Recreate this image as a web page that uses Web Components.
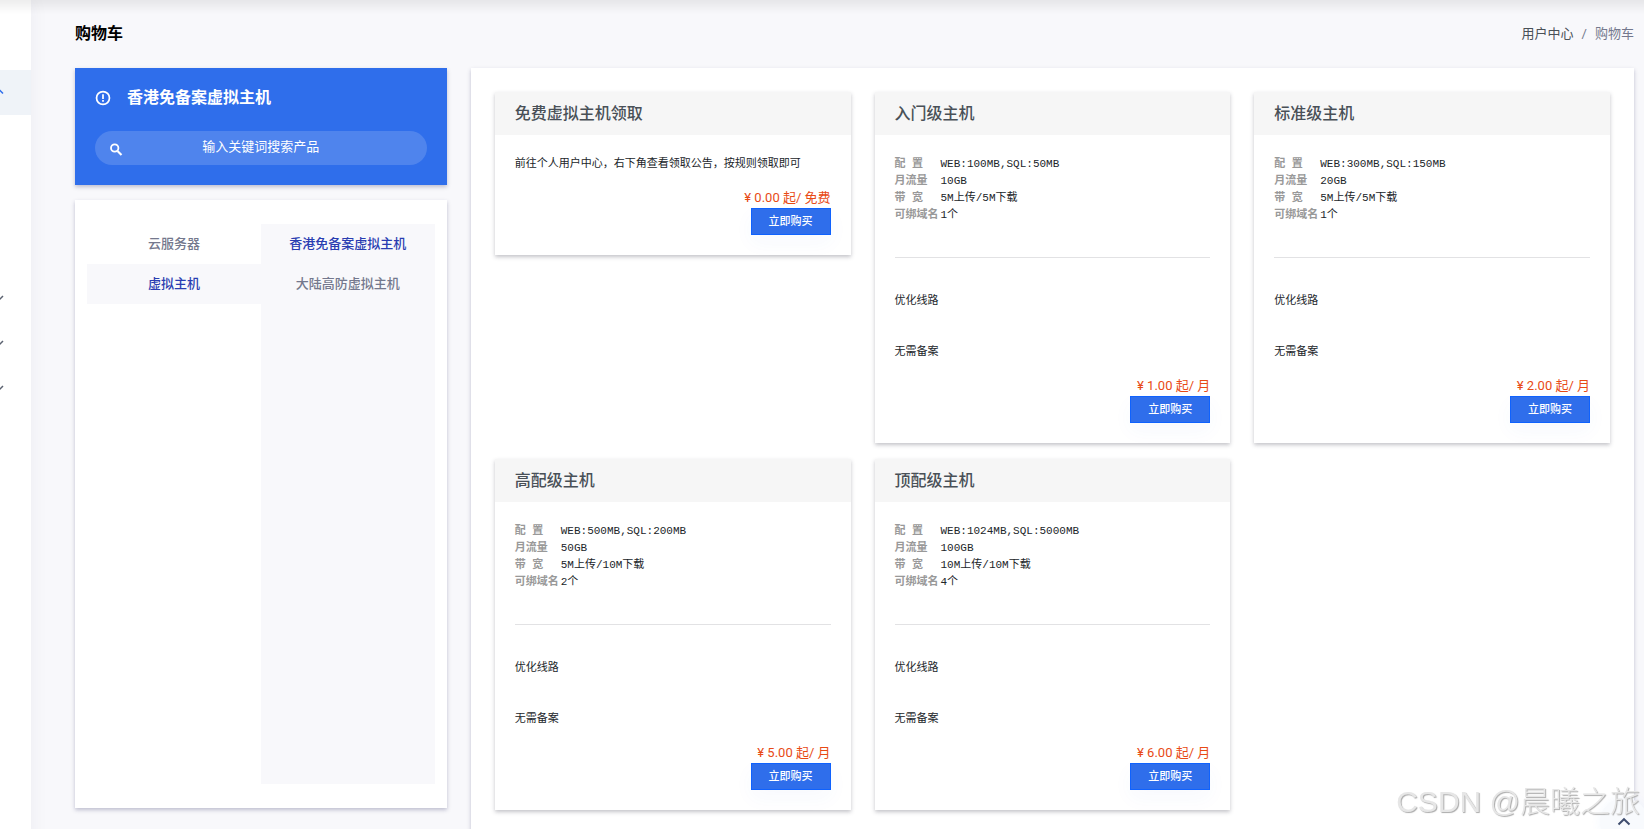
<!DOCTYPE html>
<html lang="zh-CN">
<head>
<meta charset="utf-8">
<meta name="viewport" content="width=device-width, initial-scale=1">
<title>购物车</title>
<style>
  body {
    margin: 0;
    background: #f8f8fb;
    color: #212529;
    font: 13px/20px Roboto, "Noto Sans CJK SC", sans-serif;
  }
</style>
</head>
<body>
<cart-page></cart-page>

<script>
const chevron = (dir) => dir === 'up'
  ? '<path d="M-3 6 L0 3.500 L3 6.500"/>'
  : '<path d="M-3 6 L0 9 L3 6"/>';

class SideNav extends HTMLElement {
  constructor() {
    super();
    this.attachShadow({ mode: 'open' });
    this.shadowRoot.innerHTML = `
      <style>
        :host { display: block; background: #fff; padding-top: 70px; box-shadow: 0 0 20px rgba(18, 18, 80, .05); }
        a { display: flex; align-items: center; height: 45px; color: #5b6170; }
        a.active { background: #eff3f8; color: #2f6eeb; margin-bottom: 158px; }
        svg { display: block; fill: none; stroke: currentColor; stroke-width: 1.5; }
      </style>
      <nav aria-label="主菜单"></nav>
    `;
  }

  connectedCallback() {
    const nav = this.shadowRoot.querySelector('nav');
    ['up', 'down', 'down', 'down'].forEach((dir, i) => {
      const a = document.createElement('a');
      a.href = '#';
      a.className = i === 0 ? 'active' : '';
      a.innerHTML = `<svg width="4" height="12" viewBox="0 0 4 12">${chevron(dir)}</svg>`;
      nav.appendChild(a);
    });
  }
}

class PageTitle extends HTMLElement {
  constructor() {
    super();
    this.attachShadow({ mode: 'open' });
    this.shadowRoot.innerHTML = `
      <style>
        :host { display: flex; align-items: center; justify-content: space-between; height: 68px; }
        h1 { margin: 0; font-size: 16px; line-height: 20px; color: #000; }
        ol { display: flex; gap: 8px; margin: 0; padding: 0; list-style: none; color: #74788d; }
        a { color: #495057; text-decoration: none; }
      </style>
      <h1><slot></slot></h1>
      <nav aria-label="breadcrumb">
        <ol><li><a href="#">用户中心</a></li><li>/</li><li><slot name="current"></slot></li></ol>
      </nav>
    `;
  }
}

class SearchBanner extends HTMLElement {
  constructor() {
    super();
    this.attachShadow({ mode: 'open' });
    this.shadowRoot.innerHTML = `
      <style>
        :host { display: block; padding: 20px; background: #2f6eeb; color: #fff; box-shadow: 0 2px 4px rgba(18, 18, 80, .25); }
        h2 { display: flex; align-items: center; gap: 16px; margin: 0 0 23px; font-size: 16px; line-height: 20px; }
        svg { display: block; flex: none; }
        label { display: flex; align-items: center; height: 34px; border-radius: 17px; padding: 0 14px; background: #4f84ed; }
        input {
          flex: 1; min-width: 0; margin: 0 14px 0 0; padding: 0 0 2px; border: 0; outline: 0; background: none;
          color: #fff; font: inherit; line-height: 20px; text-align: center;
        }
        input::placeholder { color: #fff; opacity: 1; }
      </style>
      <h2>
        <svg width="16" height="16" viewBox="0 0 24 24" fill="#fff"><path d="M12 1a11 11 0 1 0 0 22a11 11 0 0 0 0-22zM12 20.400a8.400 8.400 0 1 1 0-16.800a8.400 8.400 0 0 1 0 16.800zM10.700 6.500h2.600v7h-2.600zM10.700 15h2.600v2.600h-2.600z"/></svg>
        <slot></slot>
      </h2>
      <label>
        <svg width="14" height="16" viewBox="0 0 14 16" fill="none" stroke="#fff"><circle cx="5.700" cy="8" r="3.700" stroke-width="1.800"/><path d="M8.500 11 L12.500 15" stroke-width="2.200"/></svg>
        <input type="text" placeholder="输入关键词搜索产品" aria-label="输入关键词搜索产品">
      </label>
    `;
  }
}

class CategoryMenu extends HTMLElement {
  constructor() {
    super();
    this.attachShadow({ mode: 'open' });
    this.shadowRoot.innerHTML = `
      <style>
        :host { display: block; padding: 24px 12px; background: #fff; box-shadow: 0 2px 4px rgba(18, 18, 80, .25); }
        .columns { display: grid; grid-template-columns: 1fr 1fr; min-height: calc(100vh - 269px); }
        .columns div:last-child { background: #f8f8fb; }
        a { display: block; padding: 10px 0; color: #74788d; text-align: center; text-decoration: none; font-weight: 500; }
        a.active { background: #f8f8fb; color: #2a3db1; }
      </style>
      <div class="columns"></div>
    `;
  }

  connectedCallback() {
    const groups = [
      [['云服务器', false], ['虚拟主机', true]],
      [['香港免备案虚拟主机', true], ['大陆高防虚拟主机', false]],
    ];
    const columns = this.shadowRoot.querySelector('.columns');
    groups.forEach((group) => {
      const col = document.createElement('div');
      group.forEach(([name, active]) => {
        const a = document.createElement('a');
        a.href = '#';
        a.textContent = name;
        a.className = active ? 'active' : '';
        col.appendChild(a);
      });
      columns.appendChild(col);
    });
  }
}

class ProductCard extends HTMLElement {
  constructor() {
    super();
    this.attachShadow({ mode: 'open' });
    this.shadowRoot.innerHTML = `
      <style>
        :host { display: block; background: #fff; box-shadow: 0 2px 4px rgba(18, 18, 40, .25); }
        h3 { margin: 0; padding: 12px 20px 11px; background: #f6f6f6; color: #495057; font-size: 16px; line-height: 20px; font-weight: 500; }
        .body { padding: 21px 20px 20px; }
        .desc { font: 11px/17px "Liberation Mono", "Noto Sans CJK SC", monospace; }
        .desc p { margin: 0; }
        dl { display: grid; grid-template-columns: 46px 1fr; margin: 0; }
        dt { color: #999; font-weight: bold; }
        dd { margin: 0; }
        hr { margin: 33px 0 35px; border: 0; border-top: 1px solid #e2e2e4; }
        .desc p + p { margin-top: 34px; }
        .buy { display: flex; flex-direction: column; align-items: flex-end; margin-top: 15px; }
        .price { color: #e84a15; }
        button {
          height: 27px; padding: 0 17px; border: 1px solid #0f62fe; background: #2f6eeb; color: #fff;
          font: 500 11px/17px Roboto, "Noto Sans CJK SC", sans-serif; box-shadow: 0 8px 20px rgba(47, 110, 235, .04);
        }
      </style>
      <h3></h3>
      <div class="body">
        <div class="desc"></div>
        <div class="buy"><span class="price"></span><button type="button">立即购买</button></div>
      </div>
    `;
  }

  connectedCallback() {
    const root = this.shadowRoot;
    const { name, specs, notes, price, unit } = this.product;
    root.querySelector('h3').textContent = name;
    root.querySelector('.price').textContent = `¥ ${price} 起/ ${unit}`;
    let html = '';
    if (specs) {
      const labels = ['配 置', '月流量', '带 宽', '可绑域名'];
      html += '<dl>' + specs.map((v, i) => `<dt>${labels[i]}</dt><dd>${v}</dd>`).join('') + '</dl><hr>';
    }
    html += notes.map((n) => `<p>${n}</p>`).join('');
    root.querySelector('.desc').innerHTML = html;
  }
}

class ProductList extends HTMLElement {
  constructor() {
    super();
    this.attachShadow({ mode: 'open' });
    this.shadowRoot.innerHTML = `
      <style>
        :host {
          display: grid; grid-template-columns: repeat(3, minmax(0, 1fr)); align-items: start; gap: 16px 24px;
          padding: 24px 24px 40px; background: #fff; box-shadow: 0 2px 4px rgba(18, 18, 80, .25);
        }
      </style>
    `;
  }

  connectedCallback() {
    const notes = ['优化线路', '无需备案'];
    const products = [
      { name: '免费虚拟主机领取', notes: ['前往个人用户中心，右下角查看领取公告，按规则领取即可'], price: '0.00', unit: '免费' },
      { name: '入门级主机', specs: ['WEB:100MB,SQL:50MB', '10GB', '5M上传/5M下载', '1个'], notes, price: '1.00', unit: '月' },
      { name: '标准级主机', specs: ['WEB:300MB,SQL:150MB', '20GB', '5M上传/5M下载', '1个'], notes, price: '2.00', unit: '月' },
      { name: '高配级主机', specs: ['WEB:500MB,SQL:200MB', '50GB', '5M上传/10M下载', '2个'], notes, price: '5.00', unit: '月' },
      { name: '顶配级主机', specs: ['WEB:1024MB,SQL:5000MB', '100GB', '10M上传/10M下载', '4个'], notes, price: '6.00', unit: '月' },
    ];
    products.forEach((product) => {
      const card = document.createElement('product-card');
      card.product = product;
      this.shadowRoot.appendChild(card);
    });
  }
}

class BackTop extends HTMLElement {
  constructor() {
    super();
    this.attachShadow({ mode: 'open' });
    this.shadowRoot.innerHTML = `
      <style>
        :host { position: fixed; right: -4px; bottom: -17px; }
        button { display: grid; place-items: center; width: 48px; height: 48px; padding: 0; border: 0; border-radius: 24px; background: #f8fafd; box-shadow: 0 0 12px rgba(47, 110, 235, .05); }
        svg { fill: none; stroke: #3f4d6e; stroke-width: 2; }
      </style>
      <button type="button" aria-label="返回顶部">
        <svg width="14" height="10" viewBox="0 0 14 10"><path d="M1.500 7.500 L7 2.200 L12.500 7.500"/></svg>
      </button>
    `;
  }
}

class WaterMark extends HTMLElement {
  constructor() {
    super();
    this.attachShadow({ mode: 'open' });
    this.shadowRoot.innerHTML = `
      <style>
        :host {
          position: fixed; right: 4px; bottom: 7px; pointer-events: none; white-space: nowrap;
          color: #e6e6e6; font: 300 30px/40px "Liberation Sans", "Noto Sans CJK SC", sans-serif;
          text-shadow: 1px 1px 1px #aaa;
        }
      </style>
      <slot></slot>
    `;
  }
}

class CartPage extends HTMLElement {
  constructor() {
    super();
    this.attachShadow({ mode: 'open' });
    this.shadowRoot.innerHTML = `
      <style>
        :host { display: grid; grid-template-columns: 31px minmax(0, 1fr); min-height: 100vh; }
        .topbar-shadow { position: fixed; top: 0; left: 0; right: 0; height: 14px; background: linear-gradient(rgba(0, 0, 0, .07), rgba(0, 0, 0, 0)); pointer-events: none; }
        main { padding: 0 10px 24px 44px; }
        .row { display: grid; grid-template-columns: repeat(12, minmax(0, 1fr)); align-items: start; column-gap: 24px; }
        aside { grid-column: span 3; display: grid; gap: 15px; }
        product-list { grid-column: span 9; }
      </style>
      <side-nav></side-nav>
      <main>
        <page-title>购物车<span slot="current">购物车</span></page-title>
        <div class="row">
          <aside>
            <search-banner>香港免备案虚拟主机</search-banner>
            <category-menu></category-menu>
          </aside>
          <product-list></product-list>
        </div>
      </main>
      <div class="topbar-shadow"></div>
      <back-top></back-top>
      <water-mark>CSDN @晨曦之旅</water-mark>
    `;
  }
}

customElements.define('side-nav', SideNav);
customElements.define('page-title', PageTitle);
customElements.define('search-banner', SearchBanner);
customElements.define('category-menu', CategoryMenu);
customElements.define('product-card', ProductCard);
customElements.define('product-list', ProductList);
customElements.define('back-top', BackTop);
customElements.define('water-mark', WaterMark);
customElements.define('cart-page', CartPage);
</script>
</body>
</html>
